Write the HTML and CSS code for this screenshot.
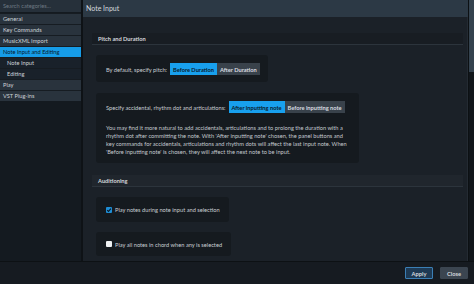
FILE: index.html
```html
<!DOCTYPE html>
<html lang="en">
<head>
    <meta charset="UTF-8">
    <title>Preferences</title>
    <link rel="stylesheet" href="styles.css">
</head>
<body>
<div class="dialog">
  <div class="main">
    <aside class="sidebar">
      <div class="search">Search categories...</div>
      <ul class="cats">
        <li class="cat">General</li>
        <li class="cat">Key Commands</li>
        <li class="cat">MusicXML Import</li>
        <li class="cat selected">Note Input and Editing</li>
        <li class="cat sub">Note Input</li>
        <li class="cat sub">Editing</li>
        <li class="cat">Play</li>
        <li class="cat">VST Plug-ins</li>
      </ul>
    </aside>

    <section class="pane">
      <div class="pane-title">Note Input</div>
      <div class="pane-body">
        <div class="group-head">Pitch and Duration</div>

        <div class="card">
          <div class="row">
            <span>By default, specify pitch:</span>
            <div class="seg">
              <button class="on">Before Duration</button>
              <button>After Duration</button>
            </div>
          </div>
        </div>

        <div class="card wide">
          <div class="row">
            <span>Specify accidental, rhythm dot and articulations:</span>
            <div class="seg">
              <button class="on">After inputting note</button>
              <button>Before inputting note</button>
            </div>
          </div>
          <p class="note">
            You may find it more natural to add accidentals, articulations and to prolong the duration with a<br>
            rhythm dot after committing the note. With 'After inputting note' chosen, the panel buttons and<br>
            key commands for accidentals, articulations and rhythm dots will affect the last input note. When<br>
            'Before inputting note' is chosen, they will affect the next note to be input.
          </p>
        </div>

        <div class="group-head audition">Auditioning</div>

        <div class="card check-card">
          <span class="box checked">
            <svg width="6" height="6" viewBox="0 0 6 6"><path d="M1.2 3.1 L2.5 4.4 L4.9 1.6" fill="none" stroke="#0d1b28" stroke-width="1.1"/></svg>
          </span>
          <span>Play notes during note input and selection</span>
        </div>

        <div class="card check-card">
          <span class="box"></span>
          <span>Play all notes in chord when any is selected</span>
        </div>
      </div>
    </section>

    <div class="scrollbar"><div class="thumb"></div></div>
  </div>

  <footer class="footer">
    <button class="apply">Apply</button>
    <button class="close">Close</button>
  </footer>
</div>
</body>
</html>
```

FILE: styles.css
```css
  body {
    margin: 0;
    background-color: #161b21;
    font-family: Lato, "Open Sans", sans-serif;
    font-size: 5.7px;
    color: #c9ced3;
  }

  .dialog {
    width: 474px;
    height: 284px;
    display: flex;
    flex-direction: column;
  }

  .main {
    height: 261px;
    display: flex;
    border-bottom: 1px solid #0d1114;
  }

  /* left category list */
  .sidebar {
    width: 81px;
    background-color: #141a20;
    border-right: 2px solid #0e1216;
  }

  .search {
    height: 12px;
    line-height: 12px;
    padding-left: 3px;
    background-color: #26303a;
    color: #6d7883;
    border-bottom: 1px solid #141a20;
  }

  .cats {
    list-style: none;
    margin: 0;
    padding: 0;
  }

  .cat {
    height: 10px;
    line-height: 10px;
    padding-left: 3px;
    background-color: #29333d;
    border-top: 1px solid #161c22;
    color: #cdd2d7;
  }

  .cat.sub {
    background-color: #19212a;
    padding-left: 7px;
  }

  .cat.selected {
    background-color: #169ce8;
    color: #08192a;
  }

  /* right pane */
  .pane {
    flex: 1;
    display: flex;
    flex-direction: column;
    background-color: #1b2128;
  }

  .pane-title {
    height: 17px;
    line-height: 17px;
    padding-left: 3px;
    background-color: #2c3945;
    color: #d4d9de;
    font-size: 7px;
  }

  .pane-body {
    flex: 1;
    padding: 16px 4px 0 9px;
    border-right: 1px solid #242b33;
  }

  .group-head {
    height: 11px;
    line-height: 11px;
    padding-left: 6px;
    background-color: #181d23;
    border-bottom: 1px solid #2c343c;
    font-weight: bold;
    color: #d3d7db;
  }

  .group-head.audition {
    margin-top: 12px;
    background-color: #20262d;
  }

  .card {
    width: fit-content;
    margin: 10px 0 0 4px;
    padding: 8px 8px 7px 10px;
    background-color: #151a1f;
    border-radius: 3px;
  }

  .card + .card {
    margin-top: 11px;
  }

  .card.wide {
    padding-right: 12px;
  }

  .row {
    display: flex;
    align-items: center;
    gap: 3px;
  }

  .seg {
    display: flex;
  }

  .seg button {
    height: 12px;
    padding: 0 3px;
    border: none;
    font-family: inherit;
    font-size: 5.7px;
    font-weight: bold;
    background-color: #39424b;
    color: #d8dce0;
  }

  .seg button.on {
    background-color: #18a0ee;
    color: #0a1a2a;
  }

  .note {
    margin: 11px 0 0 0;
    line-height: 8px;
    white-space: nowrap;
    color: #c4c9ce;
  }

  .check-card {
    display: flex;
    align-items: center;
    gap: 3px;
    height: 25px;
    padding: 0 9px 0 10px;
    box-sizing: border-box;
  }

  .card.check-card + .card.check-card {
    margin-top: 10px;
    height: 24px;
  }

  .box {
    width: 6px;
    height: 6px;
    border-radius: 1px;
    background-color: #eef0f2;
    display: flex;
  }

  .box.checked {
    background-color: #1e8ed6;
  }

  .scrollbar {
    width: 5px;
    background-color: #11161b;
    border-left: 1px solid #0c1013;
  }

  .thumb {
    height: 72px;
    background-color: #34424e;
  }

  /* bottom buttons */
  .footer {
    flex: 1;
    display: flex;
    justify-content: flex-end;
    align-items: center;
    gap: 7px;
    padding-right: 6px;
    background-color: #161b21;
  }

  .footer button {
    height: 12px;
    width: 28px;
    padding: 0;
    font-family: inherit;
    font-size: 5.7px;
    font-weight: bold;
    color: #d6dade;
    border-radius: 1px;
  }

  .apply {
    background-color: #1e3a54;
    border: 1px solid #3b7fb5;
  }

  .close {
    background-color: #3b4550;
    border: 1px solid #3b4550;
  }
```
